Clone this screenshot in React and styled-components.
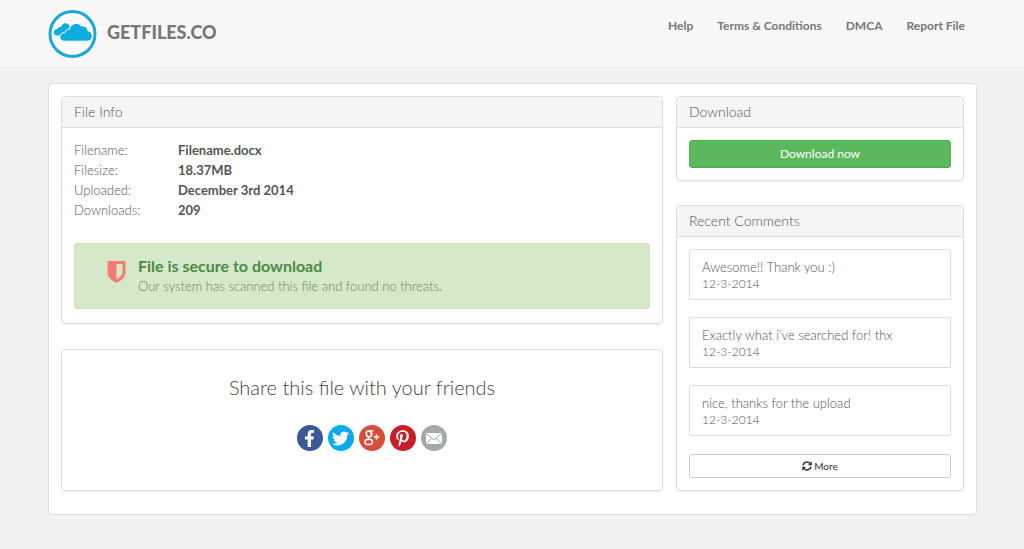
import React from "react";
import styled, { createGlobalStyle, css } from "styled-components";
import { FaFacebookF, FaTwitter, FaPinterestP } from "react-icons/fa";

const GlobalStyle = createGlobalStyle`
  *, *::before, *::after { box-sizing: border-box; }
  body {
    margin: 0;
    background: #f1f1f1;
    color: #666;
    font-family: Lato, "Open Sans", sans-serif;
    font-size: 13px;
    font-weight: 300;
    line-height: 20px;
  }
  h1, h2, h3, p, ul, dl, dd { margin: 0; padding: 0; }
  ul { list-style: none; }
`;

const Header = styled.header`
  display: flex;
  justify-content: space-between;
  align-items: flex-start;
  padding: 10px 59px 9px 48px;
  background: #f8f8f8;
  border-bottom: 1px solid #e7e7e7;
`;

const Brand = styled.a`
  display: flex;
  align-items: center;
  gap: 10px;
  height: 48px;
  color: #777;
  font-size: 18px;
  font-weight: 900;
  line-height: 28px;
  text-decoration: none;
  svg { flex: none; }
  span { padding-bottom: 4px; }
`;

const Nav = styled.nav`
  display: flex;
  gap: 24px;
  padding-top: 6px;
`;

const NavLink = styled.a`
  color: #777;
  font-size: 12px;
  font-weight: 700;
  text-decoration: none;
`;

const Page = styled.main`
  display: grid;
  grid-template-columns: minmax(0, 1fr) 288px;
  gap: 13px;
  margin: 15px 47px 34px 48px;
  padding: 12px 12px 23px;
  background: #fff;
  border: 1px solid #ddd;
  border-radius: 4px;
`;

const Column = styled.div`
  display: flex;
  flex-direction: column;
  gap: ${(p) => (p.$tight ? 24 : 25)}px;
`;

const Panel = styled.section`
  border: 1px solid #ddd;
  border-radius: 4px;
  box-shadow: 0 1px 1px rgba(0, 0, 0, 0.05);
  ${(p) => p.$grow && css`flex: 1;`}
`;

const PanelTitle = styled.h2`
  padding: 5px 12px;
  background: #f5f5f5;
  border-bottom: 1px solid #ddd;
  border-radius: 3px 3px 0 0;
  color: #555;
  font-size: 14px;
  font-weight: 300;
  line-height: 20px;
`;

const PanelBody = styled.div`
  padding: 12px;
`;

const Details = styled.dl`
  display: grid;
  grid-template-columns: 104px 1fr;
  color: #555;
  dd { font-weight: 700; }
`;

const Alert = styled.div`
  display: flex;
  gap: 12px;
  margin: 23px 0 2px;
  padding: 12px 32px;
  background: #d5e8c8;
  border: 1px solid #cfe3c2;
  border-radius: 3px;
  color: #5f8a5f;
  svg { flex: none; margin-top: 5px; }
`;

const AlertTitle = styled.h3`
  color: #4a8a4b;
  font-size: 16px;
  font-weight: 700;
  line-height: 20px;
`;

const ShareBody = styled.div`
  display: flex;
  flex-direction: column;
  align-items: center;
  gap: 24px;
  padding: 23px 12px 38px;
`;

const ShareTitle = styled.h2`
  color: #444;
  font-size: 20px;
  font-weight: 300;
  line-height: 28px;
`;

const ShareList = styled.ul`
  display: flex;
  gap: 5px;
  padding-left: 19px;
`;

const ShareButton = styled.button`
  display: flex;
  align-items: center;
  justify-content: center;
  width: 26px;
  height: 26px;
  padding: 0;
  border: 0;
  border-radius: 50%;
  background: ${(p) => p.$color};
  color: #fff;
  cursor: pointer;
`;

const BlockButton = styled.button`
  display: flex;
  align-items: center;
  justify-content: center;
  gap: 2px;
  width: 100%;
  height: ${(p) => (p.$primary ? 28 : 24)}px;
  padding: 0;
  border: 1px solid ${(p) => (p.$primary ? "#4cae4c" : "#ccc")};
  border-radius: 3px;
  background: ${(p) => (p.$primary ? "#5cb85c" : "#fff")};
  color: ${(p) => (p.$primary ? "#fff" : "#333")};
  font-family: inherit;
  font-size: ${(p) => (p.$primary ? 12 : 10)}px;
  font-weight: 400;
  line-height: 18px;
  cursor: pointer;
`;

const Comments = styled.ul`
  display: flex;
  flex-direction: column;
  gap: 17px;
  margin-bottom: 18px;
`;

const Comment = styled.li`
  padding: 8px 12px 7px;
  border: 1px solid #ddd;
  color: #555;
  line-height: 18px;
  &:first-child { border-radius: 3px 3px 0 0; }
  &:last-child { border-radius: 0 0 3px 3px; }
`;

const CommentDate = styled.time`
  display: block;
  font-size: 12px;
  line-height: 16px;
`;

const CloudLogo = () => (
  <svg width="49" height="48" viewBox="0 0 49 48" aria-hidden="true">
    <circle cx="24.500" cy="24" r="22.500" fill="#fcfcfc" stroke="#1ba8d5" strokeWidth="3" />
    <path
      fill="#0badde"
      d="M8.500 25.500a3.200 3.200 0 0 1-2.700-3.200c0-1.900 1.500-3.200 3.700-3.200.5-1.700 2-2.600 3.700-2.300.5-2.200 2-3.600 4.200-3.600 2.300 0 4 1.500 4.300 3.500l-.9 2.300c-1.900.3-3.400 1.700-3.700 3.600-2 .2-3.400 1.200-4.100 2.900z"
    />
    <path
      fill="#0badde"
      stroke="#fcfcfc"
      strokeWidth="1"
      d="M16.500 31.200c-3 0-4.700-1.900-4.700-4.300 0-2.600 2.100-4.400 4.900-4.200.5-2.300 2.400-3.700 4.600-3.400.9-3.800 3.700-5.900 7-5.900 2.300 0 4.100 1 5.200 2.700 3.500-.6 6.100 1.400 6.400 4.700 2.700.3 4.400 2.500 4.400 5.200 0 3.100-2.100 5.200-5.200 5.200z"
    />
  </svg>
);

const ShieldIcon = () => (
  <svg width="19" height="22" viewBox="0 0 19 22" aria-hidden="true">
    <path
      fill="#fa7a78"
      fillRule="evenodd"
      d="M1.500 0h16A1 1 0 0 1 18.500 1v10.500c0 4.600-3.800 8-9 10.500-5.200-2.500-9-5.900-9-10.500V1A1 1 0 0 1 1.500 0zM9.500 3v15.300c3.600-2 6-4.200 6-7V3z"
    />
  </svg>
);

const GooglePlusIcon = () => (
  <svg width="18" height="18" viewBox="0 0 18 18" fill="none" stroke="#fff" aria-hidden="true">
    <ellipse cx="5.800" cy="5" rx="2.500" ry="3" strokeWidth="1.600" transform="rotate(-12 5.800 5)" />
    <path d="M6 1.900h4.300M7.700 2.300c1.500 1.200 1.800 3.700.1 5.300" strokeWidth="1.300" />
    <path d="M6.300 7.900c-1.500 1-1 1.900.3 2.600" strokeWidth="1.600" />
    <ellipse cx="5.700" cy="12.900" rx="3.800" ry="2.600" strokeWidth="1.500" />
    <path d="M13.500 5.300v5.400M10.800 8h5.400" strokeWidth="1.400" />
  </svg>
);

const MailIcon = () => (
  <svg width="18" height="13" viewBox="0 0 18 13" aria-hidden="true">
    <rect x="1" y="1" width="16" height="11" rx="1" fill="#fff" />
    <path d="M1 1.500l8 6.500 8-6.500M1.200 11.800l5.300-5.300M16.800 11.800l-5.300-5.300" fill="none" stroke="#a3a8aa" strokeWidth="1" />
  </svg>
);

const RefreshIcon = () => (
  <svg width="10" height="10" viewBox="0 0 10 10" fill="none" stroke="#333" strokeWidth="1.600" aria-hidden="true">
    <path d="M1 4.300A4 4 0 0 1 8 2.500M9 5.700A4 4 0 0 1 2 7.500" />
    <path d="M9.800.3v4H5.900zM.2 9.700v-4h3.900z" fill="#333" stroke="none" />
  </svg>
);

const links = ["Help", "Terms & Conditions", "DMCA", "Report File"];

const details = [
  ["Filename:", "Filename.docx"],
  ["Filesize:", "18.37MB"],
  ["Uploaded:", "December 3rd 2014"],
  ["Downloads:", "209"],
];

const shares = [
  { name: "Facebook", color: "#3b5998", icon: <FaFacebookF size={17} /> },
  { name: "Twitter", color: "#08abed", icon: <FaTwitter size={17} /> },
  { name: "Google Plus", color: "#d94c3a", icon: <GooglePlusIcon /> },
  { name: "Pinterest", color: "#c61f28", icon: <FaPinterestP size={17} /> },
  { name: "Email", color: "#a3a8aa", icon: <MailIcon /> },
];

const comments = ["Awesome!! Thank you :)", "Exactly what i've searched for! thx", "nice, thanks for the upload"];

export default function App() {
  return (
    <>
      <GlobalStyle />
      <Header>
        <Brand href="#">
          <CloudLogo />
          <span>GETFILES.CO</span>
        </Brand>
        <Nav>
          {links.map((label) => (
            <NavLink href="#" key={label}>{label}</NavLink>
          ))}
        </Nav>
      </Header>
      <Page>
        <Column>
          <Panel>
            <PanelTitle>File Info</PanelTitle>
            <PanelBody>
              <Details>
                {details.map(([term, value]) => (
                  <React.Fragment key={term}>
                    <dt>{term}</dt>
                    <dd>{value}</dd>
                  </React.Fragment>
                ))}
              </Details>
              <Alert>
                <ShieldIcon />
                <div>
                  <AlertTitle>File is secure to download</AlertTitle>
                  <p>Our system has scanned this file and found no threats.</p>
                </div>
              </Alert>
            </PanelBody>
          </Panel>
          <Panel $grow>
            <ShareBody>
              <ShareTitle>Share this file with your friends</ShareTitle>
              <ShareList>
                {shares.map((s) => (
                  <li key={s.name}>
                    <ShareButton $color={s.color} aria-label={s.name}>{s.icon}</ShareButton>
                  </li>
                ))}
              </ShareList>
            </ShareBody>
          </Panel>
        </Column>
        <Column $tight>
          <Panel>
            <PanelTitle>Download</PanelTitle>
            <PanelBody>
              <BlockButton $primary>Download now</BlockButton>
            </PanelBody>
          </Panel>
          <Panel $grow>
            <PanelTitle>Recent Comments</PanelTitle>
            <PanelBody>
              <Comments>
                {comments.map((text) => (
                  <Comment key={text}>
                    <p>{text}</p>
                    <CommentDate>12-3-2014</CommentDate>
                  </Comment>
                ))}
              </Comments>
              <BlockButton>
                <RefreshIcon />
                More
              </BlockButton>
            </PanelBody>
          </Panel>
        </Column>
      </Page>
    </>
  );
}
